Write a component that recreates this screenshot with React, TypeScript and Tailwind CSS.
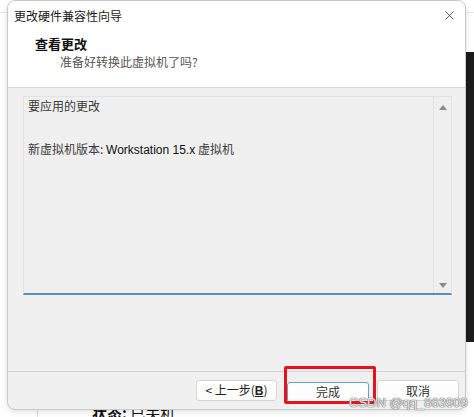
import { X } from 'lucide-react';

const cjk = "font-['Noto_Sans_CJK_SC','Noto_Sans',sans-serif]";

function Triangle({ up }: { up?: boolean }) {
  return (
    <svg width="8" height="5" viewBox="0 0 8 5" className="text-[#8a8a8a]">
      {up ? <path d="M0 5 L4 0 L8 5 Z" fill="currentColor" /> : <path d="M0 0 L8 0 L4 5 Z" fill="currentColor" />}
    </svg>
  );
}

export default function App() {
  return (
    <div className={`relative w-[474px] h-[417px] overflow-hidden bg-white ${cjk}`}>
      {/* page behind the dialog */}
      <div className="absolute left-0 right-0 top-[12px] h-px bg-[#e6e6e6]" />
      <div className="absolute right-0 top-[52px] w-[8px] h-[290px] bg-[#1c1c1c]" />
      <div className="absolute left-[37px] top-[405px] w-px h-[12px] bg-[#dcdcdc]" />
      <div className="absolute left-[92px] top-[403px] whitespace-nowrap text-[15px] leading-[20px] text-[#111]">
        <span className="font-bold">状态:</span> 已关机
      </div>

      {/* dialog window */}
      <div className="absolute left-[7px] top-0 w-[459px] h-[410px] flex flex-col rounded-[8px] border border-[#c9c9c9] bg-[#f0f0f0] shadow-[0_2px_6px_rgba(0,0,0,0.12)] overflow-hidden">
        <div className="bg-white">
          <div className="flex items-center justify-between h-[29px] pl-[6px] pr-[8px]">
            <span className="text-[12px] text-[#1a1a1a]">更改硬件兼容性向导</span>
            <X size={15} strokeWidth={1.2} className="text-[#222]" />
          </div>
          <div className="pl-[27px] pt-[5px] pb-[16px]">
            <div className="text-[13px] leading-[18px] font-bold text-[#111]">查看更改</div>
            <div className="pl-[25px] text-[12px] leading-[18px] text-[#555]">准备好转换此虚拟机了吗?</div>
          </div>
        </div>
        <div className="h-px bg-[#d6d6d6]" />

        <div className="flex-1 flex flex-col">
          <div className="mt-[8px] ml-[15px] w-[429px] h-[199px] flex bg-[#efefef] border border-[#e2e2e2] border-b-[2px] border-b-[#5d8fb0]">
            <div className="flex-1 pl-[4px] text-[12px] leading-[18px] text-[#3a3a3a]">
              <div>要应用的更改</div>
              <div className="mt-[25px]">
                新虚拟机版本: <span className="font-['Liberation_Sans',sans-serif] text-[#111]">Workstation 15.x</span> 虚拟机
              </div>
            </div>
            <div className="w-[18px] flex flex-col items-center justify-between pt-[8px] pb-[5px] border-l border-[#e3e3e3]">
              <Triangle up />
              <Triangle />
            </div>
          </div>
          <div className="flex-1" />
          <div className="h-px bg-[#d2d2d2]" />
          <div className="h-[37px] flex items-center justify-end pr-[6px]">
            <button className="w-[81px] h-[21px] bg-[#fdfdfd] border border-[#d5d5d5] rounded-[3px] text-[12px] leading-none text-[#222]">
              &lt; 上一步(<span className="underline font-['Liberation_Sans',sans-serif] font-bold">B</span>)
            </button>
            <div className="relative ml-[10px]">
              <button className="w-[82px] h-[21px] bg-[#fdfdfd] border border-[#6e9cc6] rounded-[3px] text-[12px] leading-none text-[#333]">
                完成
              </button>
              <div className="absolute -left-[3px] -top-[12px] w-[92px] h-[38px] border-[3px] border-[#e8121b] rounded-[2px]" />
            </div>
            <button className="ml-[8px] w-[82px] h-[21px] bg-[#fdfdfd] border border-[#d5d5d5] rounded-[3px] text-[12px] leading-none text-[#333]">
              取消
            </button>
          </div>
        </div>
      </div>

      <div className="absolute left-[349px] top-[395px] whitespace-nowrap text-[13px] leading-[16px] font-['Liberation_Sans',sans-serif] text-white/85 [text-shadow:0_0_1px_#666,0_0_1px_#666,0_0_1px_#888]">
        CSDN @qq_863909
      </div>
    </div>
  );
}
